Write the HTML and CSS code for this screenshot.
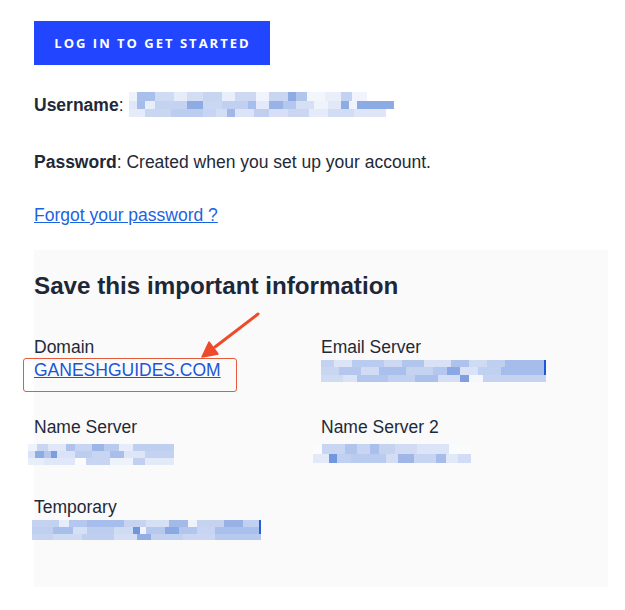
FILE: index.html
```html
<!DOCTYPE html>
<html>
<head>
<meta charset="utf-8">
<link rel="stylesheet" href="styles.css">
</head>
<body>
<div class="page">
  <a class="btn" href="#">LOG IN TO GET STARTED</a>
  <p class="line user"><b>Username</b>: <span class="mosaic m-user"></span></p>
  <p class="line pass"><b>Password</b>: Created when you set up your account.</p>
  <p class="line forgot"><a href="#">Forgot your password ?</a></p>

  <section class="info">
    <h2>Save this important information</h2>
    <div class="grid">
      <div class="cell">
        <div class="label">Domain</div>
        <div class="value domain"><a href="#">GANESHGUIDES.COM</a><span class="highlight"></span></div>
      </div>
      <div class="cell">
        <div class="label">Email Server</div>
        <div class="value"><span class="mosaic m-email"></span></div>
      </div>
      <div class="cell">
        <div class="label">Name Server</div>
        <div class="value"><span class="mosaic m-ns1"></span></div>
      </div>
      <div class="cell">
        <div class="label">Name Server 2</div>
        <div class="value"><span class="mosaic m-ns2"></span></div>
      </div>
      <div class="cell">
        <div class="label">Temporary</div>
        <div class="value"><span class="mosaic m-temp"></span></div>
      </div>
    </div>
    <svg class="arrow" width="75" height="60" viewBox="0 0 75 60">
      <line x1="64" y1="9" x2="21" y2="42" stroke="#ee4b2b" stroke-width="3" stroke-linecap="round"/>
      <polygon points="8,52 24,49 15,37" fill="#ee4b2b" stroke="#ee4b2b" stroke-width="1.5" stroke-linejoin="round"/>
    </svg>
  </section>
</div>
</body>
</html>
```

FILE: styles.css
```css
html, body {
  margin: 0;
  padding: 0;
  background: #ffffff;
}
body {
  font-family: "Liberation Sans", Arial, sans-serif;
  font-size: 17.5px;
  color: #1f2937;
}
.page {
  padding: 21px 0 0 34px;
  width: 574px;
}
.btn {
  display: block;
  width: 236px;
  height: 44px;
  line-height: 44px;
  background: #2246ff;
  color: #ffffff;
  text-decoration: none;
  text-align: center;
  font-family: "Open Sans", sans-serif;
  font-weight: 700;
  font-size: 13px;
  letter-spacing: 2px;
  text-indent: 1px;
}
.line {
  margin: 0;
  line-height: 24px;
}
.line b {
  font-weight: 700;
}
.user {
  margin-top: 27px;
  height: 25px;
  display: flex;
  align-items: center;
  white-space: pre;
}
.user .mosaic {
  margin-left: 1px;
}
.pass {
  margin-top: 33px;
}
.forgot {
  margin-top: 29px;
}
a {
  color: #1a5bd6;
}
.forgot a {
  color: #1d63e0;
}
.info {
  position: relative;
  margin-top: 23px;
  background: #fafafb;
  width: 574px;
  padding: 21px 0 45px 0;
  box-sizing: border-box;
}
.info h2 {
  margin: 0;
  font-size: 24.2px;
  line-height: 30px;
  font-weight: 700;
  color: #1e2736;
}
.grid {
  margin-top: 35px;
  display: grid;
  grid-template-columns: 287px 1fr;
  row-gap: 34px;
}
.label {
  line-height: 23px;
  color: #1f2937;
}
.value {
  line-height: 23px;
  height: 23px;
}
.domain {
  position: relative;
}
.domain a {
  color: #1a56d6;
}
.highlight {
  position: absolute;
  left: -11px;
  top: -1px;
  width: 214px;
  height: 34px;
  border: 1px solid #e65a3e;
  border-radius: 3px;
  box-sizing: border-box;
}
.arrow {
  position: absolute;
  left: 160px;
  top: 55px;
}
.mosaic {
  display: inline-block;
  background-repeat: no-repeat;
  vertical-align: top;
}
.m-user {
  width: 265px;
  height: 25px;
  background-image:
    linear-gradient(90deg, #eef2fb 0 3%, #a9bfec 3% 10%, #cfdaf3 10% 17%, #e6ecf9 17% 22%, #d3def4 22% 28%, #c7d5f1 28% 35%, #e8eefa 35% 40%, #cdd9f3 40% 48%, #f1f4fc 48% 53%, #c9d6f2 53% 60%, #8eabe4 60% 63%, #b2c6ed 63% 67%, #f3f6fd 67% 74%, #e9eefa 74% 80%, #c3d2f0 80% 84%, #f1f4fc 84% 90%, #ffffff 90% 100%),
    linear-gradient(90deg, #dfe7f8 0 3%, #a6bdeb 3% 6%, #e8edfa 6% 10%, #c4d3f1 10% 22%, #8fabe4 22% 28%, #cad7f2 28% 35%, #c1d0f0 35% 45%, #a7bdeb 45% 48%, #e3e9f8 48% 53%, #9ab3e6 53% 58%, #b4c7ee 58% 63%, #d6e0f5 63% 70%, #f0f3fc 70% 75%, #e1e8f8 75% 80%, #8eabe4 80% 83%, #eff3fc 83% 86%, #8cabe4 86% 100%),
    linear-gradient(90deg, #e5ebf9 0 6%, #c9d6f2 6% 16%, #bccdef 16% 28%, #c8d5f2 28% 33%, #d3def4 33% 37%, #a0b7e8 37% 40%, #dbe3f6 40% 47%, #c0cff0 47% 53%, #d6dff5 53% 60%, #cbd7f2 60% 68%, #e5ebf9 68% 75%, #d2dcf4 75% 85%, #dde5f7 85% 97%, #ffffff 97% 100%);
  background-size: 100% 9px, 100% 8px, 100% 8px;
  background-position: 0 0, 0 9px, 0 17px;
}
.m-email {
  width: 225px;
  height: 22px;
  margin-top: 1px;
  background-image:
    linear-gradient(90deg, #c3d2f1 0 6%, #dce4f7 6% 14%, #b9cbef 14% 28%, #cdd9f3 28% 36%, #b2c5ed 36% 46%, #d8e1f6 46% 58%, #aec2ec 58% 66%, #cfdaf3 66% 74%, #bfcff0 74% 82%, #a6bdeb 82% 99.3%, #1d56d6 99.3% 100%),
    linear-gradient(90deg, #c8d6f2 0 8%, #b5c7ee 8% 18%, #d1dcf4 18% 26%, #a9bfec 26% 38%, #c5d3f1 38% 50%, #b4c7ee 50% 56%, #8aa8e3 56% 62%, #d9e2f6 62% 70%, #c0d0f0 70% 80%, #a6bdeb 80% 99.3%, #1d56d6 99.3% 100%),
    linear-gradient(90deg, #cfdaf3 0 10%, #dbe4f7 10% 16%, #b3c6ed 16% 30%, #c1d0f0 30% 42%, #aac0ec 42% 52%, #d4def5 52% 62%, #7f9fe0 62% 66%, #f4f7fd 66% 72%, #c5d3f1 72% 100%);
  background-size: 100% 7px, 100% 8px, 100% 7px;
  background-position: 0 0, 0 7px, 0 15px;
}
.m-ns1 {
  width: 146px;
  height: 21px;
  margin-top: 5px;
  margin-left: -6px;
  background-image:
    linear-gradient(90deg, #eef2fb 0 6%, #c9d6f2 6% 14%, #dfe7f8 14% 26%, #aec2ec 26% 32%, #c8d5f2 32% 44%, #9db5e7 44% 52%, #b8caee 52% 62%, #e6ecf9 62% 72%, #bfcff0 72% 100%),
    linear-gradient(90deg, #d9e2f6 0 5%, #8fabe4 5% 11%, #b3c6ed 11% 16%, #7c9de0 16% 20%, #d9e2f6 20% 32%, #bccdef 32% 44%, #c8d5f2 44% 56%, #a8bfeb 56% 66%, #dde5f7 66% 80%, #c3d2f1 80% 100%),
    linear-gradient(90deg, #e7edf9 0 11%, #dfe7f8 11% 32%, #fafbfd 32% 40%, #c8d5f2 40% 56%, #eef2fb 56% 72%, #c1d0f0 72% 80%, #e2e9f8 80% 100%);
  background-size: 100% 7px, 100% 7px, 100% 7px;
  background-position: 0 0, 0 7px, 0 14px;
}
.m-ns2 {
  width: 158px;
  height: 19px;
  margin-top: 5px;
  margin-left: -8px;
  background-image:
    linear-gradient(90deg, #fafbfd 0 6%, #c9d6f2 6% 20%, #b0c4ec 20% 28%, #c8d5f2 28% 36%, #a9bfec 36% 42%, #c5d3f1 42% 52%, #d1dcf4 52% 66%, #dce4f7 66% 86%, #fafbfd 86% 100%),
    linear-gradient(90deg, #e3e9f8 0 10%, #7397de 10% 15%, #c0d0f0 15% 24%, #b9cbef 24% 46%, #d3def4 46% 54%, #9fb6e7 54% 64%, #c8d5f2 64% 78%, #a6bdeb 78% 84%, #e1e8f8 84% 92%, #d2dcf4 92% 100%);
  background-size: 100% 10px, 100% 9px;
  background-position: 0 0, 0 10px;
}
.m-temp {
  width: 229px;
  height: 20px;
  margin-top: 1px;
  margin-left: -2px;
  background-image:
    linear-gradient(90deg, #c3d2f1 0 12%, #e6ecf9 12% 16%, #b5c7ee 16% 24%, #a7bdeb 24% 40%, #c6d4f1 40% 50%, #d6e0f5 50% 60%, #a3bae9 60% 68%, #eef2fb 68% 72%, #c5d3f1 72% 84%, #98b2e6 84% 92%, #c0d0f0 92% 99%, #2a5fd8 99% 100%),
    linear-gradient(90deg, #bfcff0 0 9%, #a8bfeb 9% 18%, #d6e0f5 18% 24%, #bccdef 24% 36%, #cfdaf3 36% 44%, #6f95dd 44% 47%, #f1f4fc 47% 50%, #b6c8ee 50% 58%, #8aa8e3 58% 64%, #b2c5ed 64% 72%, #c8d5f2 72% 80%, #a9bfec 80% 99%, #2a5fd8 99% 100%),
    linear-gradient(90deg, #c6d4f1 0 9%, #cfdaf3 9% 22%, #bfcff0 22% 36%, #d4def5 36% 46%, #93aee5 46% 52%, #c2d1f0 52% 66%, #cbd7f2 66% 80%, #b7c9ee 80% 100%);
  background-size: 100% 7px, 100% 7px, 100% 6px;
  background-position: 0 0, 0 7px, 0 14px;
}
```
